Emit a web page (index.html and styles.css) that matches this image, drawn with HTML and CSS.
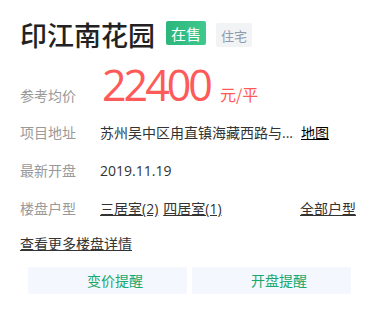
FILE: index.html
```html
<!DOCTYPE html>
<html lang="zh-CN">
<head>
    <meta charset="UTF-8">
    <meta name="viewport" content="width=device-width, initial-scale=1.0">
    <title>印江南花园</title>
    <link rel="stylesheet" href="styles.css">
</head>
<body>
    <div class="info">
        <div class="head">
            <h1 class="name">印江南花园</h1>
            <span class="tag tag-sale">在售</span>
            <span class="tag tag-type">住宅</span>
        </div>
        <div class="row row-price">
            <span class="label">参考均价</span>
            <span class="price">22400</span>
            <span class="unit">元/平</span>
        </div>
        <div class="row">
            <span class="label">项目地址</span>
            <span class="value">苏州吴中区甪直镇海藏西路与...</span>
            <a href="javascript:;" class="link map">地图</a>
        </div>
        <div class="row">
            <span class="label">最新开盘</span>
            <span class="value">2019.11.19</span>
        </div>
        <div class="row">
            <span class="label">楼盘户型</span>
            <a href="javascript:;" class="link">三居室(2)</a>
            <a href="javascript:;" class="link room">四居室(1)</a>
            <a href="javascript:;" class="link all">全部户型</a>
        </div>
        <a href="javascript:;" class="link more">查看更多楼盘详情</a>
        <div class="btns">
            <a href="javascript:;" class="btn">变价提醒</a>
            <a href="javascript:;" class="btn">开盘提醒</a>
        </div>
    </div>
</body>
</html>
```
FILE: styles.css
```css
*{
    margin: 0;
    padding: 0;
}
body{
    font-family: "Open Sans", "Noto Sans CJK SC", sans-serif;
    color: #333;
    background: #fff;
}
.info{
    padding: 17px 20px 0 20px;
}
.head{
    display: flex;
    align-items: center;
    height: 36px;
}
.name{
    font-size: 27px;
    font-weight: 500;
    color: #222;
    line-height: 36px;
    font-family: "Noto Sans CJK SC", sans-serif;
}
.tag{
    display: flex;
    align-items: center;
    justify-content: center;
    height: 24px;
    border-radius: 2px;
    font-family: "Noto Sans CJK SC", sans-serif;
}
.tag-sale{
    width: 40px;
    margin-left: 11px;
    margin-top: -4px;
    font-size: 15px;
    color: #fff;
    background: linear-gradient(90deg, #2db57b, #3ec98e);
}
.tag-type{
    width: 36px;
    margin-left: 10px;
    font-size: 13px;
    color: #8e9aae;
    background: #f2f3f5;
}
.row{
    display: flex;
    align-items: center;
    height: 38px;
    font-size: 14px;
}
.row-price{
    align-items: baseline;
    height: auto;
    margin-top: 10px;
    margin-bottom: 6px;
}
.label{
    width: 80px;
    flex-shrink: 0;
    color: #999;
    font-family: "Noto Sans CJK SC", sans-serif;
}
.price{
    font-size: 43px;
    line-height: 44px;
    color: #ff5a5a;
    letter-spacing: -3px;
    margin-left: 2px;
}
.unit{
    font-size: 16px;
    color: #ff5a5a;
    margin-left: 10px;
    font-family: "Noto Sans CJK SC", sans-serif;
}
.value{
    color: #333;
}
.link{
    color: #333;
    text-decoration: underline;
}
.map{
    margin-left: 8px;
    color: #000;
}
.room{
    margin-left: 5px;
}
.all{
    margin-left: auto;
    margin-right: 0;
}
.more{
    display: block;
    margin-top: 7px;
    font-size: 14px;
    line-height: 20px;
    width: max-content;
}
.btns{
    display: flex;
    gap: 5px;
    margin: 13px 5px 0 8px;
}
.btn{
    flex: 1;
    height: 27px;
    line-height: 27px;
    padding-left: 15px;
    text-align: center;
    font-size: 14px;
    color: #16a96b;
    background: #f4f7fd;
    border-radius: 2px;
    text-decoration: none;
}
```
